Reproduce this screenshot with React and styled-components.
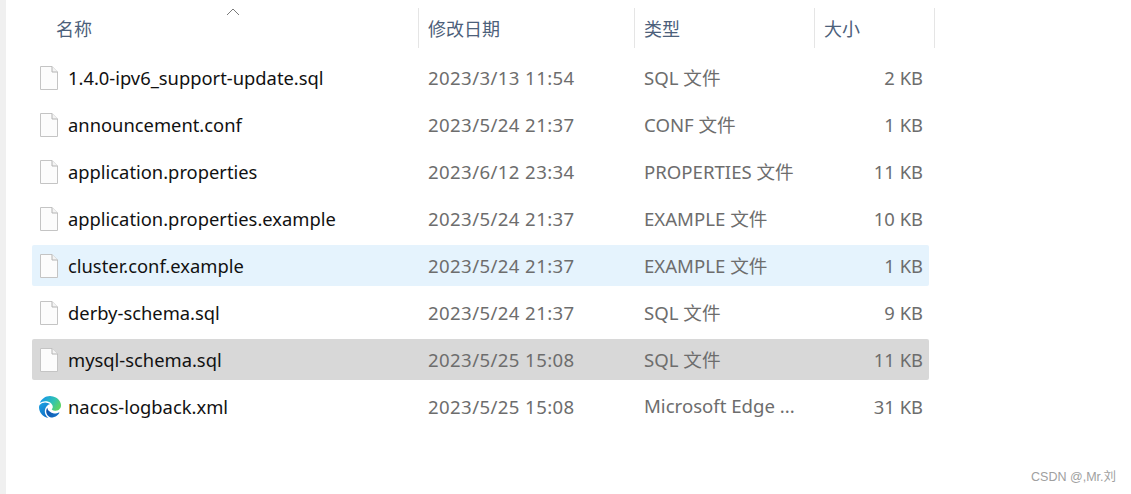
import styled, { createGlobalStyle } from 'styled-components'

const GlobalStyle = createGlobalStyle`
  html, body {
    margin: 0;
    padding: 0;
    background: #fff;
    overflow: hidden;
  }
  body {
    font-family: "Noto Sans", "Noto Sans CJK SC", sans-serif;
  }
`

const files = [
  { name: '1.4.0-ipv6_support-update.sql', date: '2023/3/13 11:54', type: 'SQL 文件', size: '2 KB' },
  { name: 'announcement.conf', date: '2023/5/24 21:37', type: 'CONF 文件', size: '1 KB' },
  { name: 'application.properties', date: '2023/6/12 23:34', type: 'PROPERTIES 文件', size: '11 KB' },
  { name: 'application.properties.example', date: '2023/5/24 21:37', type: 'EXAMPLE 文件', size: '10 KB' },
  { name: 'cluster.conf.example', date: '2023/5/24 21:37', type: 'EXAMPLE 文件', size: '1 KB', state: 'hover' },
  { name: 'derby-schema.sql', date: '2023/5/24 21:37', type: 'SQL 文件', size: '9 KB' },
  { name: 'mysql-schema.sql', date: '2023/5/25 15:08', type: 'SQL 文件', size: '11 KB', state: 'selected' },
  { name: 'nacos-logback.xml', date: '2023/5/25 15:08', type: 'Microsoft Edge ...', size: '31 KB', edge: true }
]

const FileIcon = () => (
  <svg width="20" height="26" viewBox="0 0 20 26">
    <path d="M1.5 1.5 H13 L18.5 7 V24.5 H1.5 Z" fill="#fcfcfc" stroke="#c4c4c4" strokeWidth="1" />
    <path d="M13 1.5 V7 H18.5" fill="#f4f4f4" stroke="#b4b4b4" strokeWidth="1" />
  </svg>
)

const EdgeIcon = () => (
  <svg width="22" height="22" viewBox="0 0 24 24">
    <defs>
      <linearGradient id="edgeTop" x1="0.1" y1="0.3" x2="0.9" y2="0.7">
        <stop offset="0" stopColor="#1b9de2" />
        <stop offset="0.55" stopColor="#2fc2b4" />
        <stop offset="1" stopColor="#5ad36a" />
      </linearGradient>
      <linearGradient id="edgeLeft" x1="0.2" y1="0" x2="0.7" y2="1">
        <stop offset="0" stopColor="#1c9fe0" />
        <stop offset="1" stopColor="#0f6cc4" />
      </linearGradient>
      <linearGradient id="edgeBottom" x1="0" y1="0" x2="1" y2="0.6">
        <stop offset="0" stopColor="#0c4ea6" />
        <stop offset="1" stopColor="#1472c8" />
      </linearGradient>
    </defs>
    <path fill="url(#edgeBottom)" d="M21.86 17.86q.14 0 .25.12.1.13.1.25t-.11.33l-.32.46-.43.53-.44.5q-.21.25-.38.42l-.22.23q-.58.53-1.34 1.04-.76.51-1.6.91-.86.4-1.74.64t-1.67.24q-.9 0-1.69-.28-.8-.28-1.48-.78-.68-.5-1.22-1.17-.53-.66-.92-1.44-.38-.77-.58-1.6-.2-.83-.2-1.67 0-1 .32-1.96.33-.97.87-1.8.14.95.55 1.77.41.82 1.02 1.5.6.68 1.38 1.21.78.54 1.64.9.86.36 1.77.56.92.2 1.8.2 1.12 0 2.18-.24 1.06-.23 2.06-.72l.2-.1.2-.05z" />
    <path fill="url(#edgeLeft)" d="M6.36 16.59q0 1.1.27 2.15.27 1.06.78 2.03.51.96 1.24 1.77.74.82 1.66 1.4-1.47-.2-2.8-.74-1.33-.55-2.48-1.37-1.15-.83-2.08-1.9-.92-1.07-1.58-2.33T.36 14.94Q0 13.54 0 12.06q0-.81.32-1.49.31-.68.83-1.23.53-.55 1.2-.96.66-.4 1.35-.66.74-.27 1.5-.39.78-.12 1.55-.12.7 0 1.42.1.72.12 1.4.35.68.23 1.32.57.63.35 1.16.83-.35 0-.7.07-.33.07-.65.23v-.02q-.63.28-1.2.74-.57.46-1.05 1.04-.48.58-.87 1.26-.38.67-.65 1.39-.27.71-.42 1.44-.15.72-.15 1.38z" />
    <path fill="url(#edgeTop)" d="M11.96.06q1.7 0 3.33.39 1.63.38 3.07 1.15 1.43.77 2.62 1.93 1.18 1.16 1.98 2.7.49.94.76 1.96.28 1 .28 2.08 0 .89-.23 1.7-.24.8-.69 1.48-.45.68-1.1 1.22-.64.53-1.45.88-.54.24-1.11.36-.58.13-1.16.13-.42 0-.97-.03-.54-.03-1.1-.12-.55-.1-1.05-.28-.5-.19-.84-.5-.12-.09-.23-.24-.1-.16-.1-.33 0-.15.16-.35.16-.2.35-.5.2-.28.36-.68.16-.4.16-.95 0-1.06-.4-1.96-.4-.91-1.06-1.64-.66-.74-1.52-1.28-.86-.55-1.79-.89-.84-.3-1.72-.44-.87-.14-1.76-.14-1.55 0-3.06.45T.94 7.55q.71-1.74 1.81-3.13 1.1-1.38 2.52-2.36Q6.7 1.07 8.37.58q1.66-.5 3.59-.52Z" />
  </svg>
)

export default function App() {
  return (
    <>
      <GlobalStyle />
      <Page>
        <SideStrip />
        <Explorer>
          <HeaderRow>
            <HeaderCell first>
              <SortCaret width="14" height="8" viewBox="0 0 14 8">
                <path d="M1 7 L7 1 L13 7" fill="none" stroke="#7a7a7a" strokeWidth="1" />
              </SortCaret>
              名称
            </HeaderCell>
            <HeaderCell>修改日期</HeaderCell>
            <HeaderCell>类型</HeaderCell>
            <HeaderCell>大小</HeaderCell>
          </HeaderRow>
          <FileList>
            {files.map(file => (
              <FileRow key={file.name} state={file.state}>
                <NameCell>
                  <IconSlot>{file.edge ? <EdgeIcon /> : <FileIcon />}</IconSlot>
                  {file.name}
                </NameCell>
                <DateCell>{file.date}</DateCell>
                <TypeCell>{file.type}</TypeCell>
                <SizeCell>{file.size}</SizeCell>
              </FileRow>
            ))}
          </FileList>
        </Explorer>
        <Watermark>CSDN @,Mr.刘</Watermark>
      </Page>
    </>
  )
}

const Page = styled.div`
  position: relative;
  width: 1131px;
  height: 494px;
  display: flex;
  background: #fff;
  overflow: hidden;
`

const SideStrip = styled.div`
  width: 6px;
  flex: none;
  background: #f0f0f0;
`

const Explorer = styled.div`
  display: flex;
  flex-direction: column;
  padding: 8px 0 0 26px;
`

const HeaderRow = styled.div`
  display: grid;
  grid-template-columns: 387px 216px 180px 120px;
  height: 41px;
`

const HeaderCell = styled.div`
  position: relative;
  box-sizing: border-box;
  height: 40px;
  display: flex;
  align-items: center;
  padding-left: ${props => (props.first ? '24px' : '9px')};
  border-right: 1px solid #e5e5e5;
  font-size: 18px;
  color: #4c607a;
`

const SortCaret = styled.svg`
  position: absolute;
  left: 194px;
  top: 0;
`

const FileList = styled.div`
  display: flex;
  flex-direction: column;
  gap: 6px;
  margin-top: 8px;
`

const FileRow = styled.div`
  display: grid;
  grid-template-columns: 386px 216px 180px 115px;
  align-items: center;
  width: 897px;
  height: 41px;
  border-radius: 2px;
  background: ${props =>
    props.state === 'selected' ? '#d8d8d8' : props.state === 'hover' ? '#e5f3fd' : 'transparent'};
`

const NameCell = styled.div`
  display: flex;
  align-items: center;
  font-size: 18.35px;
  color: #111;
  white-space: nowrap;
`

const IconSlot = styled.div`
  width: 36px;
  padding-left: 7px;
  box-sizing: border-box;
  display: flex;
  align-items: center;
`

const InfoCell = styled.div`
  padding-left: 10px;
  font-size: 18.6px;
  color: #6d6d6d;
  white-space: nowrap;
`

const DateCell = styled(InfoCell)`
  letter-spacing: 0.4px;
`

const TypeCell = styled(InfoCell)`
  padding-bottom: 2px;
`

const SizeCell = styled(InfoCell)`
  padding: 0 6px 0 0;
  font-size: 18.4px;
  text-align: right;
`

const Watermark = styled.div`
  position: absolute;
  right: 15px;
  bottom: 9px;
  font-family: "Liberation Sans", "Noto Sans CJK SC", sans-serif;
  font-size: 12.5px;
  color: #a0a0a0;
`
